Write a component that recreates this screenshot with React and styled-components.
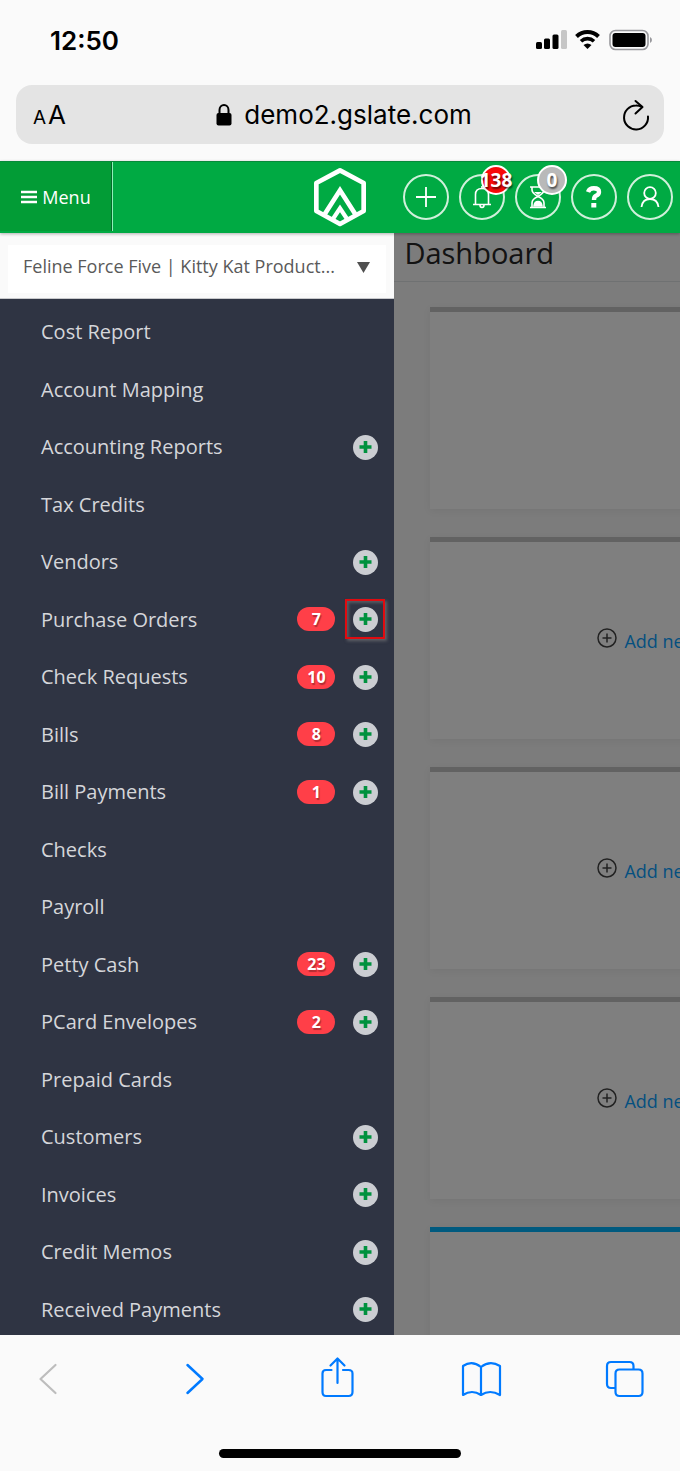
import React from "react";

import styled, { createGlobalStyle } from "styled-components";

const GlobalStyle = createGlobalStyle`
  * {
    box-sizing: border-box;
  }
  body {
    margin: 0;
    background: #fafafa;
    font-family: "Open Sans", "Noto Sans", sans-serif;
  }
  button {
    border: 0;
    padding: 0;
    background: none;
    color: inherit;
    font: inherit;
    cursor: pointer;
  }
  svg {
    display: block;
  }
`;

const StyledPage = styled.div`
  display: flex;
  flex-direction: column;
  min-height: 100vh;
  overflow: hidden;
`;

const StyledStatusBar = styled.div`
  display: flex;
  justify-content: space-between;
  align-items: center;
  height: 80px;
  padding: 0 28px 0 50px;
  font-family: Inter, sans-serif;
  font-size: 26px;
  font-weight: 600;
  color: #000;
`;

const StyledAddressBar = styled.div`
  display: flex;
  align-items: center;
  justify-content: space-between;
  height: 59px;
  margin: 5px 16px 17px;
  padding: 0 14px 0 17px;
  border-radius: 16px;
  background: #e4e4e4;
  font-family: Inter, sans-serif;
  color: #000;
`;

const StyledTextSize = styled.button`
  display: flex;
  align-items: baseline;
  gap: 2px;
  font-size: 26px;
  small {
    font-size: 19px;
  }
`;

const StyledAddress = styled.button`
  display: flex;
  align-items: center;
  gap: 12px;
  font-size: 26px;
`;

const StyledHeader = styled.header`
  position: relative;
  z-index: 1;
  display: grid;
  grid-template-columns: 1fr auto 1fr;
  align-items: center;
  height: 72px;
  padding-bottom: 2px;
  border-top: 1px solid #078a3a;
  background: #00aa43;
  box-shadow: 0 1px 3px rgba(0, 0, 0, 0.3);
  color: #fff;
`;

const StyledMenuButton = styled.button`
  display: flex;
  align-items: center;
  justify-content: center;
  gap: 5px;
  justify-self: start;
  width: 113px;
  height: 69px;
  border-right: 1px solid #8ff0b8;
  background: #029c36;
  box-shadow: inset -1px 0 #04692a;
  font-size: 18px;
`;

const StyledHeaderActions = styled.div`
  display: flex;
  justify-self: end;
  gap: 10px;
  padding-right: 7px;
`;

const StyledRoundButton = styled.button`
  position: relative;
  width: 46px;
  height: 46px;
  border: 2px solid #d0f0db;
  border-radius: 50%;
  svg {
    margin: auto;
  }
`;

const StyledCounter = styled.span`
  position: absolute;
  top: -11px;
  right: -8px;
  display: flex;
  align-items: center;
  justify-content: center;
  width: 30px;
  height: 30px;
  border: 2px solid #fff;
  border-radius: 50%;
  background: ${(props) => props.$color};
  font-size: 19px;
  font-weight: 700;
  text-shadow: 1px 2px 2px rgba(0, 0, 0, 0.6);
`;

const StyledContent = styled.div`
  display: flex;
  flex: 1;
`;

const StyledSidebar = styled.nav`
  display: flex;
  flex-direction: column;
  width: 58%;
  background: #2f3443;
`;

const StyledProjectWrap = styled.div`
  position: relative;
  padding: 12px 8px 5px;
  border-bottom: 1px solid #c8c9cc;
  background: #fafafa;
  svg {
    position: absolute;
    top: 29px;
    right: 24px;
    pointer-events: none;
  }
`;

const StyledProjectSelect = styled.select`
  display: block;
  width: 100%;
  height: 48px;
  padding: 0 40px 6px 15px;
  border: 0;
  appearance: none;
  background: #fff;
  color: #5a5a5a;
  font-family: inherit;
  font-size: 18px;
`;

const StyledMenuList = styled.ul`
  display: grid;
  flex: 1;
  grid-auto-rows: 1fr;
  margin: 0 0 -3px;
  padding: 4px 0 0;
  list-style: none;
`;

const StyledMenuItem = styled.li`
  display: flex;
  align-items: center;
  gap: 10px;
  min-height: 56px;
  padding: 0 9px 0 41px;
`;

const StyledMenuLink = styled.a`
  flex: 1;
  color: #d5d6da;
  font-size: 20px;
  text-decoration: none;
`;

const StyledBadge = styled.span`
  width: 38px;
  height: 24px;
  border-radius: 12px;
  background: #ff3f48;
  color: #fff;
  font-size: 16px;
  font-weight: 700;
  line-height: 24px;
  text-align: center;
  text-shadow: 1px 2px 1px rgba(0, 0, 0, 0.3);
`;

const StyledAddButton = styled.button`
  display: flex;
  align-items: center;
  justify-content: center;
  width: 40px;
  height: 40px;
  border: 2px solid ${(props) => (props.$active ? "#e00b10" : "transparent")};
  box-shadow: ${(props) => (props.$active ? "2px 2px 3px rgba(130, 130, 130, 0.6), inset 2px 2px 3px rgba(130, 130, 130, 0.5)" : "none")};
`;

const StyledMain = styled.main`
  position: relative;
  flex: 1;
  min-width: 0;
  overflow: hidden;
  background: #f8f8f8;
  &::after {
    content: "";
    position: absolute;
    inset: 0;
    background: rgba(0, 0, 0, 0.5);
    pointer-events: none;
  }
`;

const StyledTitle = styled.h1`
  height: 49px;
  margin: 0;
  padding-left: 10px;
  border-bottom: 1px solid #dfe3e5;
  color: #262626;
  font-size: 29px;
  font-weight: 400;
  line-height: 40px;
`;

const StyledCards = styled.div`
  display: grid;
  gap: 28px;
  height: 0;
  padding: 25px 0 0 36px;
`;

const StyledCard = styled.section`
  display: flex;
  align-items: center;
  height: 202px;
  padding-left: 167px;
  border-top: 5px solid ${(props) => props.$color};
  background: #fff;
  box-shadow: 0 2px 8px rgba(0, 0, 0, 0.06);
`;

const StyledAddLink = styled.a`
  display: flex;
  align-items: center;
  gap: 7px;
  color: #0aa0ff;
  font-size: 18px;
  text-decoration: none;
  white-space: nowrap;
  svg {
    flex: none;
    margin-bottom: 5px;
  }
`;

const StyledToolbar = styled.footer`
  display: flex;
  flex-direction: column;
  align-items: center;
  justify-content: space-between;
  height: 136px;
  padding: 20px 32px 13px 24px;
  background: #fafafa;
  position: relative;
`;

const StyledToolbarRow = styled.div`
  display: flex;
  justify-content: space-between;
  width: 100%;
`;

const StyledToolButton = styled.button`
  color: #007aff;
  &:disabled {
    color: #bdbdbd;
  }
`;

const StyledHomeBar = styled.div`
  width: 242px;
  height: 9px;
  margin-left: 8px;
  border-radius: 5px;
  background: #000;
`;

const menuItems = [
  { name: "Cost Report" },
  { name: "Account Mapping" },
  { name: "Accounting Reports", add: true },
  { name: "Tax Credits" },
  { name: "Vendors", add: true },
  { name: "Purchase Orders", add: true, count: 7, active: true },
  { name: "Check Requests", add: true, count: 10 },
  { name: "Bills", add: true, count: 8 },
  { name: "Bill Payments", add: true, count: 1 },
  { name: "Checks" },
  { name: "Payroll" },
  { name: "Petty Cash", add: true, count: 23 },
  { name: "PCard Envelopes", add: true, count: 2 },
  { name: "Prepaid Cards" },
  { name: "Customers", add: true },
  { name: "Invoices", add: true },
  { name: "Credit Memos", add: true },
  { name: "Received Payments", add: true },
];

const cards = [
  { id: 1, color: "#c4c4c4" },
  { id: 2, color: "#c4c4c4", link: true },
  { id: 3, color: "#c4c4c4", link: true },
  { id: 4, color: "#c4c4c4", link: true },
  { id: 5, color: "#00b4ff" },
];

const StatusIcons = () => (
  <svg width="116" height="22" viewBox="0 0 116 22" aria-hidden="true">
    <rect x="0" y="13" width="6" height="7" rx="1.5" />
    <rect x="8" y="9.500" width="6" height="10.500" rx="1.500" />
    <rect x="16.500" y="5.500" width="6" height="14.500" rx="1.500" />
    <rect x="25" y="1" width="6" height="19" rx="1.500" fill="#c6c6c6" />
    <path d="M40.500 7.500A16 16 0 0 1 62.500 7.500" fill="none" stroke="#000" strokeWidth="4" />
    <path d="M45 12.200A9.500 9.500 0 0 1 58 12.200" fill="none" stroke="#000" strokeWidth="3.600" />
    <path d="M47.500 16Q51.500 13 55.500 16L51.500 20Z" />
    <rect x="74" y="1.500" width="38" height="19" rx="5.500" fill="none" stroke="#98989c" strokeWidth="1.600" />
    <rect x="76.500" y="4" width="33" height="14" rx="3" />
    <path d="M114 8Q116 9 116 11Q116 13 114 14Z" fill="#98989c" />
  </svg>
);

const LockIcon = () => (
  <svg width="16" height="22" viewBox="0 0 16 22" aria-hidden="true">
    <rect x="0.500" y="9" width="15" height="12.500" rx="2" />
    <path d="M3.500 10V6a4.500 5 0 0 1 9 0v4" fill="none" stroke="#000" strokeWidth="2" />
  </svg>
);

const ReloadIcon = () => (
  <svg width="28" height="32" viewBox="0 0 28 32" fill="none" stroke="#000" strokeWidth="2" strokeLinecap="round" strokeLinejoin="round" aria-hidden="true">
    <path d="M26 17.500A12 12 0 1 1 14 6.500Q17 6.400 20 8" />
    <path d="M13.500 2L20.500 8L13.500 14.500" />
  </svg>
);

const Logo = () => (
  <svg width="52" height="60" viewBox="0 0 156 180" fill="none" stroke="#fff" strokeWidth="14" strokeLinejoin="round" role="img" aria-label="GreenSlate">
    <path d="M78 10L149 48V132L78 171L7 132V48Z" />
    <path d="M30 145L78 70L126 145" strokeLinejoin="miter" />
    <path d="M54 160L78 124L102 160" strokeLinejoin="miter" strokeWidth="13" />
  </svg>
);

const PlusIcon = () => (
  <svg width="22" height="22" viewBox="0 0 22 22" stroke="#fff" strokeWidth="1.800" aria-hidden="true">
    <path d="M11 1V21M1 11H21" />
  </svg>
);

const BellIcon = () => (
  <svg width="20" height="24" viewBox="0 0 20 24" fill="none" stroke="#fff" strokeWidth="1.600" strokeLinejoin="round" aria-hidden="true">
    <path d="M1 19.500H19M3.500 19V9.500Q3.500 3.500 10 3.500T16.500 9.500V19" />
    <path d="M8 20a2 2.500 0 0 0 4 0M10 3.500V1" />
  </svg>
);

const HourglassIcon = () => (
  <svg width="18" height="24" viewBox="0 0 18 24" fill="none" stroke="#fff" strokeWidth="1.600" aria-hidden="true">
    <path d="M1 2H17M1 22.500H17M3 2V5Q3 8 9 11.500Q15 8 15 5V2" />
    <path d="M3 22V18Q3 14 9 11.500Q15 14 15 18V22" />
    <path d="M5 21Q5.500 16.500 9 16.500T13 21Z" fill="#fff" />
    <path d="M5 7H13L9 10Z" fill="#fff" stroke="none" />
  </svg>
);

const QuestionIcon = () => (
  <svg width="18" height="22" viewBox="0 0 18 22" fill="none" stroke="#fff" aria-hidden="true">
    <path d="M3 6Q4.500 2.300 8.800 2.300Q14 2.300 14 6Q14 8.500 11 9.800Q9 10.800 9 14" strokeWidth="4.400" />
    <rect x="6.300" y="17" width="5" height="4.500" fill="#fff" stroke="none" />
  </svg>
);

const UserIcon = () => (
  <svg width="20" height="22" viewBox="0 0 20 22" fill="none" stroke="#fff" strokeWidth="1.800" aria-hidden="true">
    <circle cx="10" cy="7" r="5.800" />
    <path d="M1.500 21Q2.500 13 10 13T18.500 21" />
  </svg>
);

const AddIcon = () => (
  <svg width="26" height="26" viewBox="0 0 26 26" aria-hidden="true">
    <circle cx="13.500" cy="13.500" r="12.500" fill="#cbcdd2" />
    <path d="M13.500 7V19M7.500 13H19.500" stroke="#00913f" strokeWidth="3.600" />
  </svg>
);

const toolbarItems = [
  { name: "Back", disabled: true, path: "M31.500 10L16.500 24L31.500 38" },
  { name: "Forward", path: "M19.500 10L34.500 24L19.500 38", stroke: 2.5 },
  {
    name: "Share",
    path: "M19.500 15H14Q10.500 15 10.500 18.500V37Q10.500 41 14 41H36.500Q40.500 41 40.500 37V18.500Q40.500 15 36.500 15H31M25.500 28V4M18.500 10.500L25.500 3.500L32.500 10.500",
  },
  {
    name: "Bookmarks",
    path: "M25 12Q16 5 7 11V40Q16 34 25 40Q34 34 44 40V11Q34 5 25 12V40",
  },
  {
    name: "Tabs",
    path: "M15.500 33H11Q7 33 7 29V11Q7 7 11 7H29.500Q33.500 7 33.500 11V14.500M19.500 14.500H38.500Q42.500 14.500 42.500 18.500V37Q42.500 41 38.500 41H19.500Q15.500 41 15.500 37V18.500Q15.500 14.500 19.500 14.500Z",
  },
];

const MenuItem = ({ item }) => (
  <StyledMenuItem>
    <StyledMenuLink href="#">{item.name}</StyledMenuLink>
    {item.count && <StyledBadge>{item.count}</StyledBadge>}
    {item.add && (
      <StyledAddButton aria-label={`Add ${item.name}`} $active={item.active}>
        <AddIcon />
      </StyledAddButton>
    )}
  </StyledMenuItem>
);

const App = () => {
  return (
    <StyledPage>
      <GlobalStyle />
      <StyledStatusBar>
        <span>12:50</span>
        <StatusIcons />
      </StyledStatusBar>
      <StyledAddressBar>
        <StyledTextSize aria-label="Text size">
          <small>A</small>
          <span>A</span>
        </StyledTextSize>
        <StyledAddress>
          <LockIcon />
          demo2.gslate.com
        </StyledAddress>
        <button aria-label="Reload">
          <ReloadIcon />
        </button>
      </StyledAddressBar>

      <StyledHeader>
        <StyledMenuButton>
          <svg width="16" height="14" viewBox="0 0 16 14" stroke="#fff" strokeWidth="2.600" aria-hidden="true">
            <path d="M0 2H16M0 7H16M0 12H16" />
          </svg>
          Menu
        </StyledMenuButton>
        <Logo />
        <StyledHeaderActions>
          <StyledRoundButton aria-label="Add">
            <PlusIcon />
          </StyledRoundButton>
          <StyledRoundButton aria-label="Notifications">
            <BellIcon />
            <StyledCounter $color="#f90a0a">138</StyledCounter>
          </StyledRoundButton>
          <StyledRoundButton aria-label="Pending">
            <HourglassIcon />
            <StyledCounter $color="#b9b9b9">0</StyledCounter>
          </StyledRoundButton>
          <StyledRoundButton aria-label="Help">
            <QuestionIcon />
          </StyledRoundButton>
          <StyledRoundButton aria-label="Account">
            <UserIcon />
          </StyledRoundButton>
        </StyledHeaderActions>
      </StyledHeader>

      <StyledContent>
        <StyledSidebar>
          <StyledProjectWrap>
            <StyledProjectSelect aria-label="Project">
              <option>Feline Force Five | Kitty Kat Product...</option>
            </StyledProjectSelect>
            <svg width="13" height="11" viewBox="0 0 13 11" aria-hidden="true">
              <path d="M0 0H13L6.500 11Z" fill="#505050" />
            </svg>
          </StyledProjectWrap>
          <StyledMenuList>
            {menuItems.map((item) => (
              <MenuItem key={item.name} item={item} />
            ))}
          </StyledMenuList>
        </StyledSidebar>
        <StyledMain>
          <StyledTitle>Dashboard</StyledTitle>
          <StyledCards>
            {cards.map((card) => (
              <StyledCard key={card.id} $color={card.color}>
                {card.link && (
                  <StyledAddLink href="#">
                    <svg width="20" height="20" viewBox="0 0 20 20" fill="none" stroke="#444" strokeWidth="1.500" aria-hidden="true">
                      <circle cx="10" cy="10" r="9" />
                      <path d="M10 5.500V14.500M5.500 10H14.500" />
                    </svg>
                    Add new
                  </StyledAddLink>
                )}
              </StyledCard>
            ))}
          </StyledCards>
        </StyledMain>
      </StyledContent>

      <StyledToolbar>
        <StyledToolbarRow>
          {toolbarItems.map((item) => (
            <StyledToolButton key={item.name} aria-label={item.name} disabled={item.disabled}>
              <svg
                width="48"
                height="48"
                viewBox="0 0 48 48"
                fill="none"
                stroke="currentColor"
                strokeWidth={item.stroke || 2.2}
                strokeLinecap="round"
                strokeLinejoin="round"
                aria-hidden="true"
              >
                <path d={item.path} />
              </svg>
            </StyledToolButton>
          ))}
        </StyledToolbarRow>
        <StyledHomeBar />
      </StyledToolbar>
    </StyledPage>
  );
};

export default App;
